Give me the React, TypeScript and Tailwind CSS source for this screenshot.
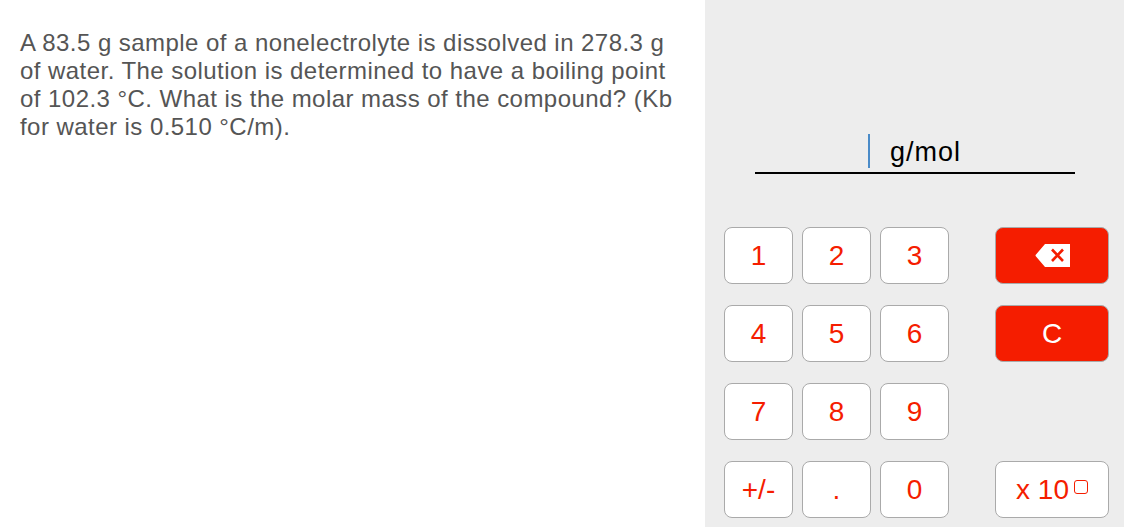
const digits = ["1", "2", "3", "4", "5", "6", "7", "8", "9", "+/-", ".", "0"]

function BackspaceIcon() {
  return (
    <svg width="35" height="23" viewBox="0 0 35 23">
      <path d="M10 0 H35 V23 H10 L0.8 12.2 Q0.2 11.5 0.8 10.8 Z" fill="#fff" />
      <path d="M17 5.5 L28 17 M28 5.5 L17 17" stroke="#f51d00" strokeWidth="2.6" />
    </svg>
  )
}

export default function App() {
  return (
    <div className="flex h-[527px] w-[1124px] font-['Liberation_Sans',Arial,sans-serif]">
      {/* Question */}
      <div className="w-[705px] bg-white pl-5 pt-[29px]">
        <p className="w-[668px] text-[24px] leading-[28px] tracking-[0.45px] text-[#555]">
          A 83.5 g sample of a nonelectrolyte is dissolved in 278.3 g of water. The solution is determined to have a
          boiling point of 102.3 °C. What is the molar mass of the compound? (Kb for water is 0.510 °C/m).
        </p>
      </div>

      {/* Answer pad */}
      <div className="flex-1 bg-[#ededed]">
        <div className="ml-[50px] mt-[134px] w-[320px] border-b-2 border-black">
          <div className="flex h-[38px] items-start pl-[113px]">
            <span className="h-[34px] w-[2px] bg-[#4a8bc8]" />
            <span className="ml-[20px] mt-[1px] text-[27px] leading-[34px] tracking-[1px] text-black">g/mol</span>
          </div>
        </div>

        <div className="mt-[53px] ml-[19px] flex gap-[46px]">
          <div className="grid grid-cols-[69px_69px_69px] gap-x-[9px] gap-y-[21px]">
            {digits.map((d) => (
              <button
                key={d}
                className="flex h-[57px] items-center justify-center rounded-[8px] border border-[#aaa] bg-white text-[28px] text-[#f51d00]"
              >
                {d}
              </button>
            ))}
          </div>
          <div className="flex w-[114px] flex-col gap-[21px]">
            <button className="flex h-[57px] items-center justify-center rounded-[8px] border border-[#aaa] bg-[#f51d00]">
              <BackspaceIcon />
            </button>
            <button className="flex h-[57px] items-center justify-center rounded-[8px] border border-[#aaa] bg-[#f51d00] text-[28px] text-white">
              C
            </button>
            <div className="h-[57px]" />
            <button className="flex h-[57px] items-center justify-center rounded-[8px] border border-[#aaa] bg-white text-[28px] text-[#f51d00]">
              x 10
              <span className="mb-[6px] ml-[5px] inline-block h-[14px] w-[14px] rounded-[3px] border-[1.5px] border-[#f51d00]" />
            </button>
          </div>
        </div>
      </div>
    </div>
  )
}
